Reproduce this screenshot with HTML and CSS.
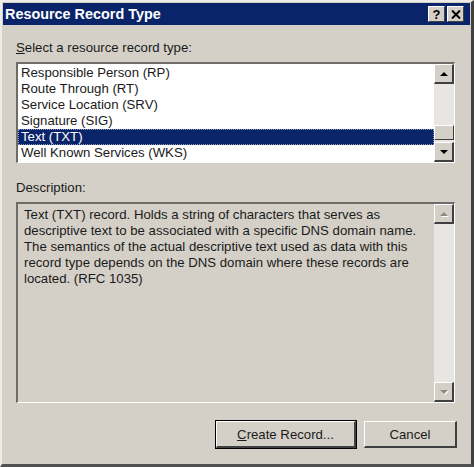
FILE: index.html
```html
<!DOCTYPE html>
<html lang="en">

<head>
    <meta charset="UTF-8">
    <title>Resource Record Type</title>
    <link rel="stylesheet" href="styles.css">
</head>

<body>
    <div class="window">
        <!-- title bar -->
        <div class="titlebar">
            <span class="title">Resource Record Type</span>
            <div class="capBtns">
                <span class="capBtn">?</span>
                <span class="capBtn close">
                    <svg width="10" height="9" viewBox="0 0 10 9"><path d="M1 0.5 L9 8.5 M9 0.5 L1 8.5" stroke="#000" stroke-width="2"/></svg>
                </span>
            </div>
        </div>

        <div class="content">
            <p class="label"><u>S</u>elect a resource record type:</p>
            <div class="listbox">
                <ul class="items">
                    <li>Responsible Person (RP)</li>
                    <li>Route Through (RT)</li>
                    <li>Service Location (SRV)</li>
                    <li>Signature (SIG)</li>
                    <li class="selected">Text (TXT)</li>
                    <li>Well Known Services (WKS)</li>
                </ul>
                <div class="scrollbar">
                    <span class="arrow up"></span>
                    <div class="track">
                        <span class="thumb"></span>
                    </div>
                    <span class="arrow down"></span>
                </div>
            </div>

            <p class="label desc">Description:</p>
            <div class="descbox">
                <p class="desctext">Text (TXT) record. Holds a string of characters that serves as<br>
                    descriptive text to be associated with a specific DNS domain name.<br>
                    The semantics of the actual descriptive text used as data with this<br>
                    record type depends on the DNS domain where these records are<br>
                    located. (RFC 1035)</p>
                <div class="scrollbar off">
                    <span class="arrow up"></span>
                    <div class="track"></div>
                    <span class="arrow down"></span>
                </div>
            </div>

            <div class="buttons">
                <button class="btn default"><u>C</u>reate Record...</button>
                <button class="btn">Cancel</button>
            </div>
        </div>
    </div>
</body>

</html>
```

FILE: styles.css
```css
* {
    margin: 0;
    padding: 0;
    box-sizing: border-box;
}

body {
    background: #d4d0c8;
    font-family: "Liberation Sans", Arial, sans-serif;
    font-size: 13.2px;
    color: #1a1a1a;
}

.window {
    width: 474px;
    height: 467px;
    background: #d4d0c8;
    border-top: 2px solid #eeece8;
    border-left: 2px solid #eeece8;
    border-right: 3px solid #404040;
    border-bottom: 3px solid #505050;
    padding: 1px 1px 0 1px;
    display: flex;
    flex-direction: column;
}

.titlebar {
    height: 22px;
    background: #0a246a;
    display: flex;
    align-items: center;
    justify-content: space-between;
    padding: 0 6px 0 2px;
}

.title {
    color: #fff;
    font-weight: bold;
    font-size: 14.4px;
}

.capBtns {
    display: flex;
    gap: 2px;
}

.capBtn {
    width: 17px;
    height: 16px;
    background: #d4d0c8;
    border-top: 1px solid #fff;
    border-left: 1px solid #fff;
    border-right: 1px solid #404040;
    border-bottom: 1px solid #404040;
    display: flex;
    align-items: center;
    justify-content: center;
    font-weight: bold;
    font-size: 13px;
    color: #000;
}

.content {
    flex: 1;
    padding: 15px 15px 0 13px;
    display: flex;
    flex-direction: column;
}

.label {
    line-height: 16px;
}

.listbox {
    margin-top: 6px;
    height: 101px;
    background: #fff;
    border-top: 2px solid #6e6c68;
    border-left: 2px solid #6e6c68;
    border-right: 1px solid #fff;
    border-bottom: 1px solid #fff;
    display: flex;
}

.items {
    flex: 1;
    list-style: none;
    padding-top: 1px;
}

.items li {
    height: 16px;
    line-height: 16px;
    padding-left: 3px;
}

.items .selected {
    background: #0a246a;
    color: #fff;
    outline: 1px dotted #8a96c0;
    outline-offset: -1px;
}

.scrollbar {
    width: 20px;
    display: flex;
    flex-direction: column;
}

.track {
    flex: 1;
    background: #e8e6e2;
    display: flex;
    flex-direction: column;
    justify-content: flex-end;
}

.thumb {
    height: 15px;
    margin-bottom: 2px;
    background: #d4d0c8;
    border-top: 1px solid #fff;
    border-left: 1px solid #fff;
    border-right: 1px solid #404040;
    border-bottom: 1px solid #404040;
}

.arrow {
    height: 20px;
    background: #d4d0c8;
    border-top: 1px solid #fff;
    border-left: 1px solid #fff;
    border-right: 2px solid #404040;
    border-bottom: 2px solid #404040;
    display: flex;
    align-items: center;
    justify-content: center;
}

.arrow::after {
    content: "";
    border-left: 4px solid transparent;
    border-right: 4px solid transparent;
}

.arrow.up::after {
    border-bottom: 4px solid #000;
}

.arrow.down::after {
    border-top: 4px solid #000;
}

.off .arrow::after {
    filter: drop-shadow(1px 1px 0 #fff);
}

.off .arrow.up::after {
    border-bottom-color: #8c8a86;
}

.off .arrow.down::after {
    border-top-color: #8c8a86;
}

.desc {
    margin-top: 17px;
}

.descbox {
    margin-top: 6px;
    height: 201px;
    background: #d4d0c8;
    border-top: 2px solid #6e6c68;
    border-left: 2px solid #6e6c68;
    border-right: 1px solid #fff;
    border-bottom: 1px solid #fff;
    display: flex;
}

.desctext {
    flex: 1;
    padding: 3px 2px 0 6px;
    line-height: 16px;
    white-space: nowrap;
    overflow: hidden;
}

.buttons {
    margin-top: 18px;
    margin-right: -2px;
    display: flex;
    justify-content: flex-end;
    gap: 8px;
}

.btn {
    height: 27px;
    background: #d4d0c8;
    font-family: "Liberation Sans", Arial, sans-serif;
    font-size: 13.2px;
    color: #1a1a1a;
    border-top: 1px solid #fff;
    border-left: 1px solid #fff;
    border-right: 2px solid #404040;
    border-bottom: 2px solid #404040;
}

.btn.default {
    width: 140px;
    outline: 1px solid #000;
}

.btn:not(.default) {
    width: 93px;
}
```
